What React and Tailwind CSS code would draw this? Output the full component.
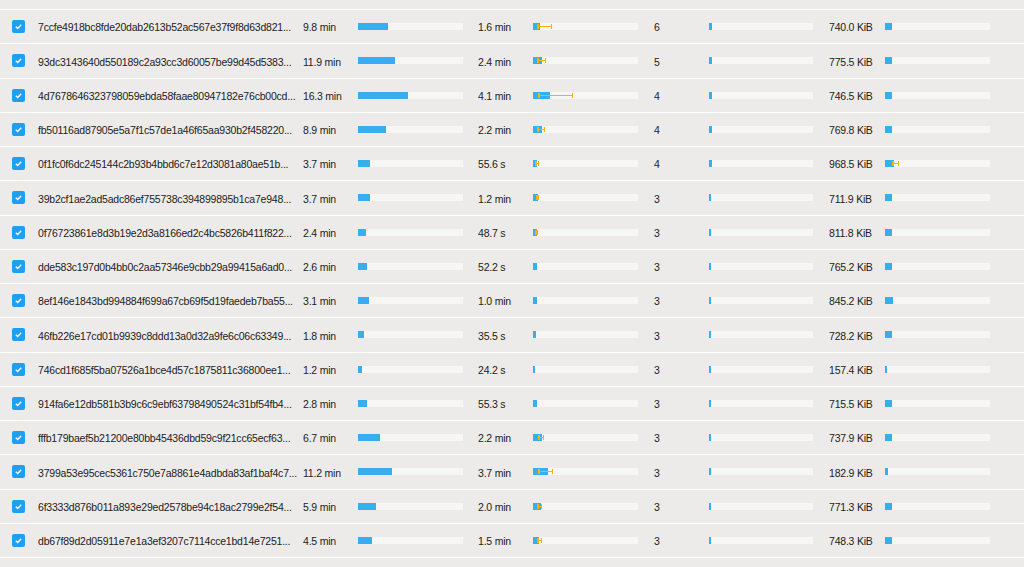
import React from "react";

const rows = [
  { h: "7ccfe4918bc8fde20dab2613b52ac567e37f9f8d63d821...", d1: "9.8 min", f1: 30, d2: "1.6 min", f2: 7, e: [4, 19], n: "6", f3: 3, s: "740.0 KiB", f4: 7 },
  { h: "93dc3143640d550189c2a93cc3d60057be99d45d5383...", d1: "11.9 min", f1: 37, d2: "2.4 min", f2: 9, e: [4, 13], n: "5", f3: 3, s: "775.5 KiB", f4: 7 },
  { h: "4d7678646323798059ebda58faae80947182e76cb00cd...", d1: "16.3 min", f1: 50, d2: "4.1 min", f2: 17, e: [5, 40], n: "4", f3: 3, s: "746.5 KiB", f4: 7 },
  { h: "fb50116ad87905e5a7f1c57de1a46f65aa930b2f458220...", d1: "8.9 min", f1: 28, d2: "2.2 min", f2: 9, e: [4, 12], n: "4", f3: 3, s: "769.8 KiB", f4: 7 },
  { h: "0f1fc0f6dc245144c2b93b4bbd6c7e12d3081a80ae51b...", d1: "3.7 min", f1: 12, d2: "55.6 s", f2: 4, e: [2, 6], n: "4", f3: 3, s: "968.5 KiB", f4: 9, e4: [7, 14] },
  { h: "39b2cf1ae2ad5adc86ef755738c394899895b1ca7e948...", d1: "3.7 min", f1: 12, d2: "1.2 min", f2: 5, e: [3, 6], n: "3", f3: 2, s: "711.9 KiB", f4: 7 },
  { h: "0f76723861e8d3b19e2d3a8166ed2c4bc5826b411f822...", d1: "2.4 min", f1: 8, d2: "48.7 s", f2: 4, e: [2, 5], n: "3", f3: 2, s: "811.8 KiB", f4: 7 },
  { h: "dde583c197d0b4bb0c2aa57346e9cbb29a99415a6ad0...", d1: "2.6 min", f1: 9, d2: "52.2 s", f2: 4, n: "3", f3: 2, s: "765.2 KiB", f4: 7 },
  { h: "8ef146e1843bd994884f699a67cb69f5d19faedeb7ba55...", d1: "3.1 min", f1: 11, d2: "1.0 min", f2: 4, n: "3", f3: 2, s: "845.2 KiB", f4: 8 },
  { h: "46fb226e17cd01b9939c8ddd13a0d32a9fe6c06c63349...", d1: "1.8 min", f1: 6, d2: "35.5 s", f2: 3, n: "3", f3: 2, s: "728.2 KiB", f4: 7 },
  { h: "746cd1f685f5ba07526a1bce4d57c1875811c36800ee1...", d1: "1.2 min", f1: 4, d2: "24.2 s", f2: 2, n: "3", f3: 2, s: "157.4 KiB", f4: 2 },
  { h: "914fa6e12db581b3b9c6c9ebf63798490524c31bf54fb4...", d1: "2.8 min", f1: 9, d2: "55.3 s", f2: 4, n: "3", f3: 2, s: "715.5 KiB", f4: 7 },
  { h: "fffb179baef5b21200e80bb45436dbd59c9f21cc65ecf63...", d1: "6.7 min", f1: 22, d2: "2.2 min", f2: 9, e: [5, 11], n: "3", f3: 2, s: "737.9 KiB", f4: 7 },
  { h: "3799a53e95cec5361c750e7a8861e4adbda83af1baf4c7...", d1: "11.2 min", f1: 34, d2: "3.7 min", f2: 15, e: [5, 20], n: "3", f3: 2, s: "182.9 KiB", f4: 3 },
  { h: "6f3333d876b011a893e29ed2578be94c18ac2799e2f54...", d1: "5.9 min", f1: 18, d2: "2.0 min", f2: 8, e: [4, 9], n: "3", f3: 2, s: "771.3 KiB", f4: 7 },
  { h: "db67f89d2d05911e7e1a3ef3207c7114cce1bd14e7251...", d1: "4.5 min", f1: 14, d2: "1.5 min", f2: 6, e: [4, 9], n: "3", f3: 2, s: "748.3 KiB", f4: 7 },
];

function Bar({ fill, err, width = 105 }) {
  return (
    <div className="relative h-[7px] bg-[#f6f6f5]" style={{ width }}>
      <div className="absolute left-0 top-0 h-full bg-[#37afef]" style={{ width: fill }} />
      {err && (
        <div
          className="absolute top-[1px] h-[5px]"
          style={{ left: err[0], width: err[1] - err[0] }}
        >
          <div className="absolute left-0 right-0 top-[2px] h-px bg-[#f5b300]" />
          <div className="absolute left-0 top-0 h-full w-[1.5px] bg-[#f5b300]" />
          <div className="absolute right-0 top-0 h-full w-[1.5px] bg-[#f5b300]" />
        </div>
      )}
    </div>
  );
}

function Check() {
  return (
    <div className="flex h-[13px] w-[13px] items-center justify-center rounded-[2px] bg-[#1e9ff2]">
      <svg width="9" height="9" viewBox="0 0 10 10">
        <path d="M2 5.2 L4.1 7.2 L8 3" fill="none" stroke="#fff" strokeWidth="1.5" />
      </svg>
    </div>
  );
}

export default function App() {
  return (
    <div
      className="h-[567px] w-[1024px] overflow-hidden bg-[#edebe9] text-[10.5px] tracking-[-0.02em] text-[#222]"
      style={{ fontFamily: '"Liberation Sans", Arial, sans-serif' }}
    >
      <div className="h-[9px]" />
      {rows.map((r, i) => (
        <div key={i} className="flex h-[34.25px] items-center border-t border-white">
          <div className="pl-[12px]">
            <Check />
          </div>
          <div className="ml-[13px] w-[265px] whitespace-nowrap pt-[3px]">{r.h}</div>
          <div className="w-[55px] pt-[3px]">{r.d1}</div>
          <div className="w-[120px]">
            <Bar fill={r.f1} />
          </div>
          <div className="w-[55px] pt-[3px]">{r.d2}</div>
          <div className="w-[121px]">
            <Bar fill={r.f2} err={r.e} />
          </div>
          <div className="w-[55px] pt-[3px]">{r.n}</div>
          <div className="w-[120px]">
            <Bar fill={r.f3} width={104} />
          </div>
          <div className="w-[56px] pt-[3px]">{r.s}</div>
          <div className="w-[105px]">
            <Bar fill={r.f4} err={r.e4} />
          </div>
        </div>
      ))}
      <div className="border-t border-white" />
    </div>
  );
}
